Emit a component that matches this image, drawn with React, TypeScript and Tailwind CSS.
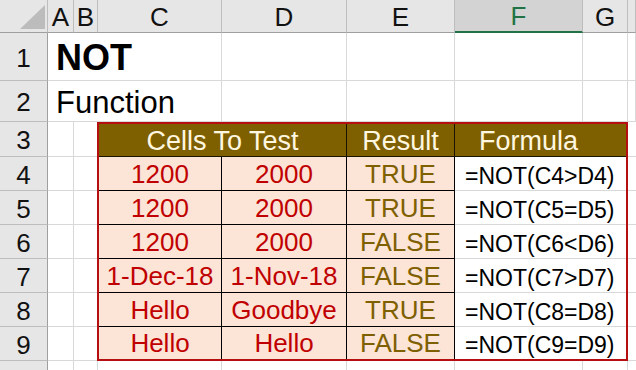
import React from "react";

const font = { fontFamily: '"Liberation Sans", Arial, sans-serif' };

const colHeads = ["A", "B", "C", "D", "E", "F", "G", ""];

const rowsData = [
  { c: "1200", d: "2000", e: "TRUE", f: "=NOT(C4>D4)" },
  { c: "1200", d: "2000", e: "TRUE", f: "=NOT(C5=D5)" },
  { c: "1200", d: "2000", e: "FALSE", f: "=NOT(C6<D6)" },
  { c: "1-Dec-18", d: "1-Nov-18", e: "FALSE", f: "=NOT(C7>D7)" },
  { c: "Hello", d: "Goodbye", e: "TRUE", f: "=NOT(C8=D8)" },
  { c: "Hello", d: "Hello", e: "FALSE", f: "=NOT(C9=D9)" },
];

function RowHead({ n }: { n: string }) {
  return (
    <div className="flex items-center justify-center bg-[#e6e6e6] border-r border-b border-r-[#9f9f9f] border-b-[#bdbdbd] text-[26px] text-[#111] leading-none pt-[2px]">
      {n}
    </div>
  );
}

function Blank() {
  return <div className="border-r border-b border-[#d9d9d9] bg-white" />;
}

export default function App() {
  return (
    <div
      className="w-[636px] h-[370px] overflow-hidden bg-white grid grid-cols-[48px_26px_24px_124px_125px_108px_128px_45px_1fr] grid-rows-[33px_48px_41px_35px_repeat(6,34px)_1fr]"
      style={font}
    >
      {/* corner */}
      <div className="bg-[#e6e6e6] border-r border-b border-r-[#bdbdbd] border-b-[#9f9f9f]">
        <svg width="47" height="32" viewBox="0 0 47 32">
          <polygon points="20,29 45,29 45,5" fill="#bcbcbc" />
        </svg>
      </div>
      {colHeads.map((h, i) =>
        h === "F" ? (
          <div
            key={i}
            className="flex items-center justify-center bg-[#d3d3d3] border-r border-r-[#bdbdbd] border-b-2 border-b-[#217346] text-[26px] text-[#217346] leading-none pt-[1px]"
          >
            {h}
          </div>
        ) : (
          <div
            key={i}
            className="flex items-center justify-center bg-[#e6e6e6] border-r border-b border-r-[#bdbdbd] border-b-[#9f9f9f] text-[26px] text-[#111] leading-none pt-[1px]"
          >
            {h}
          </div>
        )
      )}

      {/* row 1 */}
      <RowHead n="1" />
      <div className="col-span-3 flex items-end pl-[8px] pb-[4px] border-r border-b border-[#d9d9d9] text-[36px] font-bold leading-none text-black whitespace-nowrap">
        NOT
      </div>
      <Blank />
      <Blank />
      <Blank />
      <Blank />
      <Blank />

      {/* row 2 */}
      <RowHead n="2" />
      <div className="col-span-3 flex items-end pl-[8px] pb-[3px] border-r border-b border-[#d9d9d9] text-[31px] leading-none text-black whitespace-nowrap">
        Function
      </div>
      <Blank />
      <Blank />
      <Blank />
      <Blank />
      <Blank />

      {/* rows 3-9 headers and A/B cells */}
      {[3, 4, 5, 6, 7, 8, 9].map((n) => (
        <React.Fragment key={n}>
          <div className="col-start-1" style={{ gridRow: n + 1 }}>
            <div className="h-full flex items-center justify-center bg-[#e6e6e6] border-r border-b border-r-[#9f9f9f] border-b-[#bdbdbd] text-[26px] text-[#111] leading-none pt-[2px]">
              {n}
            </div>
          </div>
          <div className="col-start-2 border-r border-b border-[#d9d9d9]" style={{ gridRow: n + 1 }} />
          <div className="col-start-3 border-r border-b border-[#d9d9d9]" style={{ gridRow: n + 1 }} />
          <div className="col-start-9 border-b border-[#d9d9d9]" style={{ gridRow: n + 1 }} />
        </React.Fragment>
      ))}

      {/* the table C3:G9 */}
      <div className="col-start-4 col-span-5 row-start-4 row-span-7 -ml-px border-2 border-[#b50f12] grid grid-cols-[123px_125px_108px_1fr] grid-rows-[33px_repeat(5,34px)_1fr]">
        <div className="col-span-2 flex items-center justify-center bg-[#7f6000] border-r border-b border-[#1a1400] text-[27px] text-[#fff7e0] leading-none pt-[3px]">
          Cells To Test
        </div>
        <div className="flex items-center justify-center bg-[#7f6000] border-r border-b border-[#1a1400] text-[27px] text-[#fff7e0] leading-none pt-[3px]">
          Result
        </div>
        <div className="flex items-center pl-[24px] bg-[#7f6000] border-b border-[#1a1400] text-[27px] text-[#fff7e0] leading-none pt-[3px]">
          Formula
        </div>
        {rowsData.map((r, i) => {
          const last = i === rowsData.length - 1;
          const b = last ? "" : "border-b";
          return (
            <React.Fragment key={i}>
              <div className={`flex items-end justify-center pb-[3px] bg-[#fce4d6] border-r border-black ${b} text-[26px] text-[#c00000] leading-none whitespace-nowrap`}>
                {r.c}
              </div>
              <div className={`flex items-end justify-center pb-[3px] bg-[#fce4d6] border-r border-black ${b} text-[26px] text-[#c00000] leading-none whitespace-nowrap`}>
                {r.d}
              </div>
              <div className={`flex items-end justify-center pb-[3px] bg-[#fce4d6] border-r border-black ${b} text-[26px] text-[#7f6000] leading-none whitespace-nowrap`}>
                {r.e}
              </div>
              <div className={`flex items-end pl-[10px] pb-[2px] bg-white ${b} border-[#d9d9d9] text-[23px] text-black leading-none whitespace-nowrap`}>
                {r.f}
              </div>
            </React.Fragment>
          );
        })}
      </div>

      {/* row 10 */}
      <div className="col-start-1 row-start-11 bg-[#e6e6e6] border-r border-r-[#9f9f9f]" />
      <div className="col-start-2 row-start-11 border-r border-[#d9d9d9]" />
      <div className="col-start-3 row-start-11 border-r border-[#d9d9d9]" />
      <div className="col-start-4 row-start-11 border-r border-[#d9d9d9]" />
      <div className="col-start-5 row-start-11 border-r border-[#d9d9d9]" />
      <div className="col-start-6 row-start-11 border-r border-[#d9d9d9]" />
      <div className="col-start-7 row-start-11 border-r border-[#d9d9d9]" />
      <div className="col-start-8 row-start-11 border-r border-[#d9d9d9]" />
    </div>
  );
}
